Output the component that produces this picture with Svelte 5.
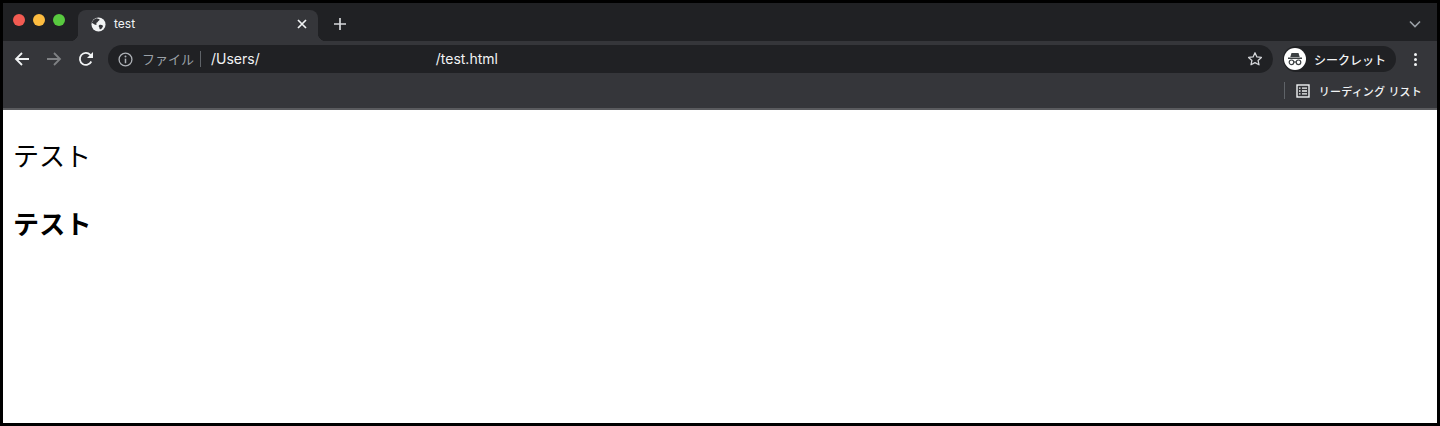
<script>
let tabTitle = 'test';
let heading = 'テスト';
</script>

<div class="frame">
  <header class="chrome">
    <div class="tabstrip">
      <div class="lights">
        <span class="light red"></span>
        <span class="light yellow"></span>
        <span class="light green"></span>
      </div>
      <div class="tab">
        <svg class="favicon" viewBox="0 0 16 16" width="15" height="15">
          <circle cx="8" cy="8" r="7.500" fill="#f1f3f4" />
          <path d="M5.800 1.200c1 .5 2.600.4 3.200 1.300.5.800-.4 1.400-1 1.800-.7.400-.8 1.300-1.600 1.500-.8.200-.8 1-.5 1.700.3.800-.5 1.100-1.200.8C3.500 8 2.400 6.600.8 6.300c.6-2.400 2.600-4.400 5-5.100zM9.400 8.300c1.100-.3 2.400 0 3.100.8.500.7.100 1.500-.4 2.100-.6.800-1 1.800-2 1.900-.8.100-1-.8-1.100-1.500-.1-.7-.8-1.100-.8-1.900 0-.6.600-1.200 1.200-1.400z" fill="#35363a" />
        </svg>
        <span class="tab-title">{tabTitle}</span>
        <svg class="tab-close" viewBox="0 0 10 10" width="10" height="10">
          <path d="M1 1l8 8M9 1l-8 8" stroke="#f1f3f4" stroke-width="1.700" fill="none" />
        </svg>
      </div>
      <svg class="new-tab" viewBox="0 0 14 14" width="14" height="14">
        <path d="M7 1v12M1 7h12" stroke="#d5d7da" stroke-width="1.700" fill="none" />
      </svg>
      <svg class="tab-menu" viewBox="0 0 12 8" width="12" height="8">
        <path d="M1 1.500l5 5 5-5" stroke="#9aa0a6" stroke-width="1.600" fill="none" />
      </svg>
    </div>

    <div class="toolbar">
      <svg class="nav back" viewBox="0 0 16 16" width="16" height="16">
        <path d="M15 8H2M8 2L2 8l6 6" stroke="#f1f3f4" stroke-width="1.800" fill="none" />
      </svg>
      <svg class="nav forward" viewBox="0 0 16 16" width="16" height="16">
        <path d="M1 8h13M8 2l6 6-6 6" stroke="#7f8184" stroke-width="1.800" fill="none" />
      </svg>
      <svg class="nav reload" viewBox="0 0 16 16" width="16" height="16">
        <path d="M13.300 10.500A6 6 0 1 1 12.300 3.800L14 5.500" stroke="#f1f3f4" stroke-width="1.800" fill="none" />
        <path d="M15 1v6H9z" fill="#f1f3f4" />
      </svg>
      <div class="omnibox">
        <svg class="info" viewBox="0 0 14 14" width="15" height="15">
          <circle cx="7" cy="7" r="6" stroke="#aeb2b7" stroke-width="1.200" fill="none" />
          <path d="M7 6.200v4.300" stroke="#aeb2b7" stroke-width="1.400" />
          <circle cx="7" cy="4.200" r=".9" fill="#aeb2b7" />
        </svg>
        <span class="scheme">ファイル</span>
        <span class="sep"></span>
        <span class="url">/Users/</span>
        <span class="url url-file">/test.html</span>
        <svg class="star" viewBox="0 0 16 16" width="16" height="16">
          <path d="M8 1.800l1.900 4.100 4.500.5-3.300 3 .9 4.400L8 11.600l-4 2.200.9-4.400-3.300-3 4.500-.5z" stroke="#d5d7da" stroke-width="1.300" fill="none" stroke-linejoin="round" />
        </svg>
      </div>
      <div class="incognito">
        <span class="avatar">
          <svg viewBox="0 0 18 18" width="18" height="18">
            <path d="M5.500 3h7l1.200 4H4.300zM2 7.500h14V9H2z" fill="#3c4043" />
            <circle cx="5.500" cy="12.300" r="2.300" stroke="#3c4043" stroke-width="1.200" fill="none" />
            <circle cx="12.500" cy="12.300" r="2.300" stroke="#3c4043" stroke-width="1.200" fill="none" />
            <path d="M7.800 12h2.400" stroke="#3c4043" stroke-width="1.200" />
          </svg>
        </span>
        <span class="incognito-label">シークレット</span>
      </div>
      <div class="kebab"><span></span><span></span><span></span></div>
    </div>

    <div class="bookmarks">
      <span class="bm-sep"></span>
      <svg class="reading" viewBox="0 0 14 14" width="14" height="14">
        <rect x="1" y="1" width="12" height="12" stroke="#f1f3f4" stroke-width="1.400" fill="none" />
        <path d="M3 4.200h1.500M6 4.200h5M3 7h1.500M6 7h5M3 9.800h1.500M6 9.800h5" stroke="#f1f3f4" stroke-width="1.300" />
      </svg>
      <span class="reading-label">リーディング リスト</span>
    </div>
  </header>

  <main class="page">
    <p class="plain">{heading}</p>
    <p class="bold">{heading}</p>
  </main>
</div>

<style>
:global(body) {
  margin: 0;
  background: #000;
}

.frame {
  box-sizing: border-box;
  height: 426px;
  border: 3px solid #000;
  background: #fff;
  display: flex;
  flex-direction: column;
  font-family: Inter, "Noto Sans CJK JP", sans-serif;
}

.chrome {
  background: #35363a;
  border-bottom: 2px solid #5a5b5e;
}

.tabstrip {
  height: 38px;
  background: #202124;
  display: flex;
  align-items: flex-end;
}

.lights {
  display: flex;
  gap: 8px;
  padding: 0 13px 0 10px;
  align-self: flex-start;
  margin-top: 11px;
}

.light {
  width: 12px;
  height: 12px;
  border-radius: 50%;
}
.red { background: #f25b52; }
.yellow { background: #fdbc40; }
.green { background: #58c93f; }

.tab {
  position: relative;
  width: 240px;
  height: 31px;
  box-sizing: border-box;
  padding: 0 11px 3px 13px;
  background: #35363a;
  border-radius: 8px 8px 0 0;
  display: flex;
  align-items: center;
  color: #f1f3f4;
  font-size: 12px;
}
.tab::before,
.tab::after {
  content: "";
  position: absolute;
  bottom: 0;
  width: 8px;
  height: 8px;
}
.tab::before {
  left: -8px;
  background: radial-gradient(circle at 0 0, #202124 8px, #35363a 8.500px);
}
.tab::after {
  right: -8px;
  background: radial-gradient(circle at 100% 0, #202124 8px, #35363a 8.500px);
}

.tab-title {
  margin-left: 8px;
  margin-bottom: 1px;
  flex: 1;
}

.new-tab {
  margin: 0 0 10px 15px;
}

.tab-menu {
  margin: 0 16px 13px auto;
}

.toolbar {
  height: 36px;
  display: flex;
  align-items: center;
}

.nav {
  flex: none;
}
.back { margin-left: 11px; }
.forward { margin-left: 16px; }
.reload { margin-left: 16px; }

.omnibox {
  margin-left: 14px;
  flex: 1;
  height: 28px;
  border-radius: 14px;
  background: #202124;
  display: flex;
  align-items: center;
  padding: 0 10px;
  font-size: 14px;
}

.scheme {
  margin-left: 9px;
  margin-bottom: 2px;
  color: #9aa0a6;
  font-size: 13px;
}

.sep {
  width: 1px;
  height: 16px;
  background: #5f6368;
  margin: 0 10px 0 6px;
}

.url {
  color: #f1f3f4;
  margin-bottom: 2px;
}
.url-file {
  margin-left: 176px;
}

.star {
  margin-left: auto;
}

.incognito {
  margin-left: 10px;
  height: 26px;
  width: 113px;
  border-radius: 13px;
  background: #202124;
  display: flex;
  align-items: center;
  color: #f1f3f4;
  font-size: 12px;
}

.avatar {
  width: 22px;
  height: 22px;
  margin-left: 1px;
  border-radius: 50%;
  background: #fff;
  display: flex;
  align-items: center;
  justify-content: center;
}

.incognito-label {
  margin-left: 8px;
  font-weight: 500;
}

.kebab {
  width: 38px;
  margin-right: 3px;
  display: flex;
  flex-direction: column;
  align-items: center;
  gap: 2px;
}
.kebab span {
  width: 3px;
  height: 3px;
  border-radius: 50%;
  background: #f1f3f4;
}

.bookmarks {
  height: 27px;
  display: flex;
  align-items: center;
  justify-content: flex-end;
  padding: 0 15px 4px 0;
  color: #f1f3f4;
  font-size: 11px;
  font-weight: 500;
  letter-spacing: .2px;
}

.bm-sep {
  width: 1px;
  height: 17px;
  background: #5f6368;
}

.reading {
  margin-left: 11px;
}

.reading-label {
  margin-left: 9px;
}

.page {
  flex: 1;
  padding: 0 10px;
  color: #000;
  font-family: "Noto Sans CJK JP", sans-serif;
  font-size: 26px;
  line-height: 38px;
}

.plain {
  margin: 26px 0 0;
}

.bold {
  margin: 30px 0 0;
  font-weight: bold;
  letter-spacing: .3px;
}
</style>
